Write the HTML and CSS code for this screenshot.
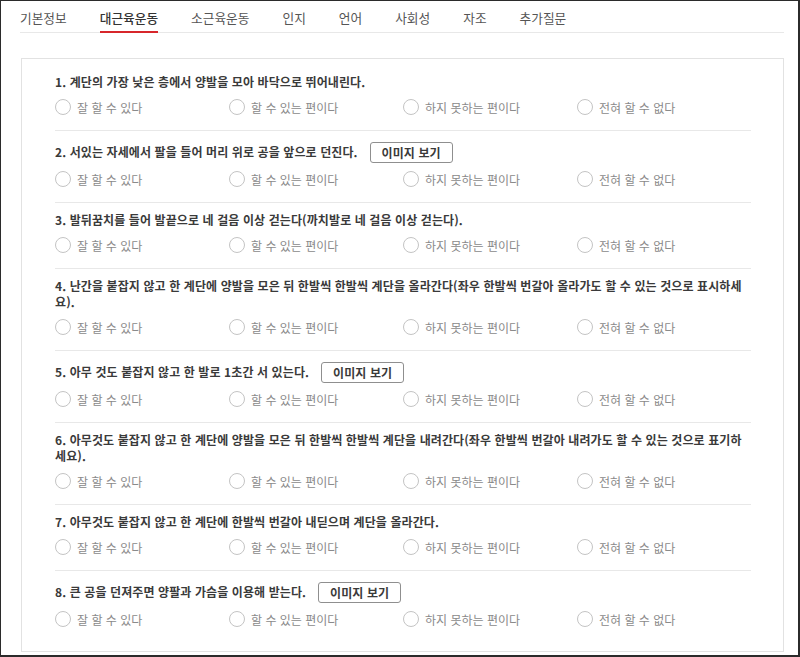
FILE: index.html
```html
<!DOCTYPE html>
<html lang="ko">
<head>
<meta charset="utf-8">
<title>발달 체크</title>
<link rel="stylesheet" href="styles.css">
</head>
<body>
<div class="frame">
  <nav class="tabs">
    <a class="tab">기본정보</a>
    <a class="tab active">대근육운동</a>
    <a class="tab">소근육운동</a>
    <a class="tab">인지</a>
    <a class="tab">언어</a>
    <a class="tab">사회성</a>
    <a class="tab">자조</a>
    <a class="tab">추가질문</a>
  </nav>

  <section class="card">
    <div class="question">
      <div class="title"><span class="text">1. 계단의 가장 낮은 층에서 양발을 모아 바닥으로 뛰어내린다.</span></div>
      <div class="options">
        <label class="opt"><span class="radio"></span>잘 할 수 있다</label>
        <label class="opt"><span class="radio"></span>할 수 있는 편이다</label>
        <label class="opt"><span class="radio"></span>하지 못하는 편이다</label>
        <label class="opt"><span class="radio"></span>전혀 할 수 없다</label>
      </div>
    </div>

    <div class="question">
      <div class="title with-btn"><span class="text">2. 서있는 자세에서 팔을 들어 머리 위로 공을 앞으로 던진다.</span><button class="img-btn">이미지 보기</button></div>
      <div class="options">
        <label class="opt"><span class="radio"></span>잘 할 수 있다</label>
        <label class="opt"><span class="radio"></span>할 수 있는 편이다</label>
        <label class="opt"><span class="radio"></span>하지 못하는 편이다</label>
        <label class="opt"><span class="radio"></span>전혀 할 수 없다</label>
      </div>
    </div>

    <div class="question">
      <div class="title"><span class="text">3. 발뒤꿈치를 들어 발끝으로 네 걸음 이상 걷는다(까치발로 네 걸음 이상 걷는다).</span></div>
      <div class="options">
        <label class="opt"><span class="radio"></span>잘 할 수 있다</label>
        <label class="opt"><span class="radio"></span>할 수 있는 편이다</label>
        <label class="opt"><span class="radio"></span>하지 못하는 편이다</label>
        <label class="opt"><span class="radio"></span>전혀 할 수 없다</label>
      </div>
    </div>

    <div class="question">
      <div class="title"><span class="text">4. 난간을 붙잡지 않고 한 계단에 양발을 모은 뒤 한발씩 한발씩 계단을 올라간다(좌우 한발씩 번갈아 올라가도 할 수 있는 것으로 표시하세요).</span></div>
      <div class="options">
        <label class="opt"><span class="radio"></span>잘 할 수 있다</label>
        <label class="opt"><span class="radio"></span>할 수 있는 편이다</label>
        <label class="opt"><span class="radio"></span>하지 못하는 편이다</label>
        <label class="opt"><span class="radio"></span>전혀 할 수 없다</label>
      </div>
    </div>

    <div class="question">
      <div class="title with-btn"><span class="text">5. 아무 것도 붙잡지 않고 한 발로 1초간 서 있는다.</span><button class="img-btn">이미지 보기</button></div>
      <div class="options">
        <label class="opt"><span class="radio"></span>잘 할 수 있다</label>
        <label class="opt"><span class="radio"></span>할 수 있는 편이다</label>
        <label class="opt"><span class="radio"></span>하지 못하는 편이다</label>
        <label class="opt"><span class="radio"></span>전혀 할 수 없다</label>
      </div>
    </div>

    <div class="question">
      <div class="title"><span class="text">6. 아무것도 붙잡지 않고 한 계단에 양발을 모은 뒤 한발씩 한발씩 계단을 내려간다(좌우 한발씩 번갈아 내려가도 할 수 있는 것으로 표기하세요).</span></div>
      <div class="options">
        <label class="opt"><span class="radio"></span>잘 할 수 있다</label>
        <label class="opt"><span class="radio"></span>할 수 있는 편이다</label>
        <label class="opt"><span class="radio"></span>하지 못하는 편이다</label>
        <label class="opt"><span class="radio"></span>전혀 할 수 없다</label>
      </div>
    </div>

    <div class="question">
      <div class="title"><span class="text">7. 아무것도 붙잡지 않고 한 계단에 한발씩 번갈아 내딛으며 계단을 올라간다.</span></div>
      <div class="options">
        <label class="opt"><span class="radio"></span>잘 할 수 있다</label>
        <label class="opt"><span class="radio"></span>할 수 있는 편이다</label>
        <label class="opt"><span class="radio"></span>하지 못하는 편이다</label>
        <label class="opt"><span class="radio"></span>전혀 할 수 없다</label>
      </div>
    </div>

    <div class="question">
      <div class="title with-btn"><span class="text">8. 큰 공을 던져주면 양팔과 가슴을 이용해 받는다.</span><button class="img-btn">이미지 보기</button></div>
      <div class="options">
        <label class="opt"><span class="radio"></span>잘 할 수 있다</label>
        <label class="opt"><span class="radio"></span>할 수 있는 편이다</label>
        <label class="opt"><span class="radio"></span>하지 못하는 편이다</label>
        <label class="opt"><span class="radio"></span>전혀 할 수 없다</label>
      </div>
    </div>
  </section>
</div>
</body>
</html>
```

FILE: styles.css
```css
html, body {
  margin: 0;
  padding: 0;
  background: #ffffff;
}

body {
  font-family: "Noto Sans CJK KR", "Noto Sans", sans-serif;
  font-size: 12px;
  color: #333333;
}

.frame {
  box-sizing: border-box;
  width: 800px;
  height: 657px;
  border-top: 1px solid #2b2b2b;
  border-left: 1px solid #2b2b2b;
  border-right: 2px solid #2b2b2b;
  border-bottom: 2px solid #2b2b2b;
  padding: 0 14px 0 19px;
  overflow: hidden;
  background: #ffffff;
}

.tabs {
  display: flex;
  gap: 33px;
  border-bottom: 1px solid #e8e8e8;
}

.tab {
  display: block;
  padding: 9px 0 5px;
  line-height: 16px;
  font-size: 12.7px;
  color: #555555;
  border-bottom: 2px solid transparent;
  margin-bottom: -1px;
  cursor: pointer;
}

.tab.active {
  color: #333333;
  font-weight: 500;
  border-bottom-color: #d7262b;
}

.card {
  margin: 25px 0 0 1px;
  border: 1px solid #e2e2e2;
  padding: 6px 32px 9px 33px;
}

.question {
  padding: 9px 0 14px;
}

.question + .question {
  border-top: 1px solid #e8e8e8;
}

.title {
  font-weight: 700;
  color: #3a3a3a;
  line-height: 16px;
  font-size: 12px;
  letter-spacing: 0.1px;
}

.title.with-btn {
  display: flex;
  align-items: center;
  gap: 12px;
  height: 22px;
  margin-top: 1px;
}

.img-btn {
  font-family: inherit;
  font-size: 12px;
  font-weight: 700;
  color: #3a3a3a;
  background: #ffffff;
  border: 1px solid #8f8f8f;
  border-radius: 3px;
  height: 21px;
  padding: 0 11px;
  line-height: 19px;
  letter-spacing: 0.1px;
  cursor: pointer;
}

.options {
  display: grid;
  grid-template-columns: repeat(4, 174px);
  margin-top: 8px;
}

.with-btn + .options {
  margin-top: 7px;
}

.opt {
  display: flex;
  align-items: center;
  gap: 6px;
  height: 18px;
  color: #8a8a8a;
  font-size: 12px;
}

.radio {
  box-sizing: border-box;
  width: 16px;
  height: 16px;
  border: 1px solid #c4c4c4;
  border-radius: 50%;
  background: #ffffff;
  flex: none;
}
```
